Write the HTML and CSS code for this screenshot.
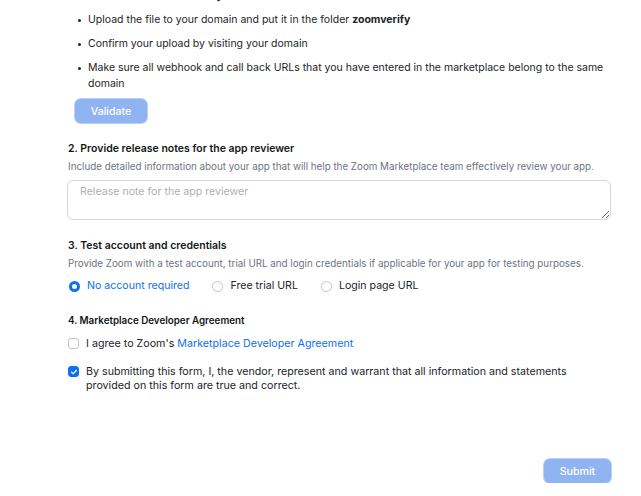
FILE: index.html
```html
<!DOCTYPE html>
<html>
<head>
<meta charset="utf-8">
<link rel="stylesheet" href="styles.css">
</head>
<body>
<div class="page">
  <ul class="steps">
    <li>Create a folder <b>zoomverify</b> under root and make it writable</li>
    <li>Upload the file to your domain and put it in the folder <b>zoomverify</b></li>
    <li>Confirm your upload by visiting your domain</li>
    <li>Make sure all webhook and call back URLs that you have entered in the marketplace belong to the same domain</li>
  </ul>
  <button class="btn validate">Validate</button>

  <section class="sec sec2">
    <h3>2. Provide release notes for the app reviewer</h3>
    <p class="desc">Include detailed information about your app that will help the Zoom Marketplace team effectively review your app.</p>
    <textarea class="notes" placeholder="Release note for the app reviewer"></textarea>
  </section>

  <section class="sec sec3">
    <h3>3. Test account and credentials</h3>
    <p class="desc">Provide Zoom with a test account, trial URL and login credentials if applicable for your app for testing purposes.</p>
    <div class="radios">
      <label class="radio on"><span class="dot"></span><span class="lbl">No account required</span></label>
      <label class="radio"><span class="dot"></span><span class="lbl">Free trial URL</span></label>
      <label class="radio"><span class="dot"></span><span class="lbl">Login page URL</span></label>
    </div>
  </section>

  <section class="sec sec4">
    <h4>4. Marketplace Developer Agreement</h4>
    <label class="check"><span class="box"></span><span class="lbl">I agree to Zoom's <a href="#">Marketplace Developer Agreement</a></span></label>
    <label class="check on"><span class="box"><svg viewBox="0 0 12 12" width="8" height="8"><path d="M2.2 6.2 L4.8 8.6 L9.8 3.4" fill="none" stroke="#fff" stroke-width="1.8" stroke-linecap="round" stroke-linejoin="round"/></svg></span><span class="lbl">By submitting this form, I, the vendor, represent and warrant that all information and statements provided on this form are true and correct.</span></label>
  </section>

  <div class="footer">
    <button class="btn submit">Submit</button>
  </div>
</div>
</body>
</html>
```

FILE: styles.css
```css
* { box-sizing: border-box; }
html, body { margin: 0; padding: 0; background: #fff; }
body {
  font-family: Inter, "Noto Sans", "Liberation Sans", sans-serif;
  font-size: 10.5px;
  color: #222328;
  overflow: hidden;
}
.page {
  width: 641px;
  padding: 0 30px 0 68px;
  margin-top: -12px;
}
.steps {
  list-style: none;
  margin: 0;
  padding: 0 0 0 10px;
}
.steps li {
  position: relative;
  line-height: 16px;
  margin-bottom: 8px;
  padding-left: 10px;
}
.steps li::before {
  content: "";
  position: absolute;
  left: 0;
  top: 7px;
  width: 3px;
  height: 3px;
  border-radius: 50%;
  background: #222328;
}
.steps li b { font-weight: 700; }
.btn {
  border: none;
  border-radius: 6px;
  background: #8fb4f1;
  color: #fff;
  font-family: inherit;
  font-size: 10.6px;
  font-weight: 500;
  height: 24px;
  cursor: pointer;
}
.validate {
  width: 72px;
  margin: -1px 0 0 7px;
  display: block;
  box-shadow: 0 0 0 1px #b9cff5;
}
.sec h3 {
  margin: 0;
  font-size: 10.5px;
  font-weight: 600;
  line-height: 16px;
  color: #131619;
}
.sec h4 {
  margin: 0;
  font-size: 9.8px;
  font-weight: 600;
  line-height: 16px;
  color: #131619;
}
.desc {
  margin: 2px 0 0;
  font-size: 9.8px;
  line-height: 16px;
  color: #6e7380;
  white-space: nowrap;
}
.sec2 { margin-top: 18px; }
.notes {
  display: block;
  width: 544px;
  height: 40px;
  margin-top: 5px;
  margin-left: -1px;
  border: 1px solid #d4d6dc;
  border-radius: 6px;
  padding: 4px 12px;
  font-family: inherit;
  font-size: 10.6px;
  color: #222;
  resize: vertical;
}
.notes::placeholder { color: #adb0b8; }
.sec3 { margin-top: 18px; }
.radios {
  display: flex;
  gap: 23px;
  margin-top: 6px;
  padding-left: 1px;
}
.radio {
  display: flex;
  align-items: center;
  gap: 7px;
  line-height: 16px;
  font-size: 10.6px;
}
.dot {
  width: 11px;
  height: 11px;
  border-radius: 50%;
  border: 1px solid #bfc2c9;
  background: #fff;
}
.radio.on .dot {
  border: 3px solid #0e6ff0;
}
.radio.on .lbl { color: #0e6ff0; }
.sec4 { margin-top: 19px; }
.check {
  display: flex;
  align-items: flex-start;
  gap: 7px;
  line-height: 14px;
  font-size: 10.7px;
  margin-top: 8px;
  padding-left: 0;
}
.check + .check { margin-top: 14px; }
.box {
  flex: none;
  width: 11px;
  height: 11px;
  margin-top: 1px;
  border: 1px solid #bfc2c9;
  border-radius: 3px;
  background: #fff;
  display: flex;
  align-items: center;
  justify-content: center;
}
.check.on .box {
  border-color: #0e6ff0;
  background: #0e6ff0;
}
.check .lbl { max-width: 520px; }
.check a { color: #0e6ff0; text-decoration: none; }
.footer {
  display: flex;
  justify-content: flex-end;
  margin-top: 66px;
}
.submit {
  width: 67px;
  box-shadow: 0 0 0 1px #b9cff5;
}
```
